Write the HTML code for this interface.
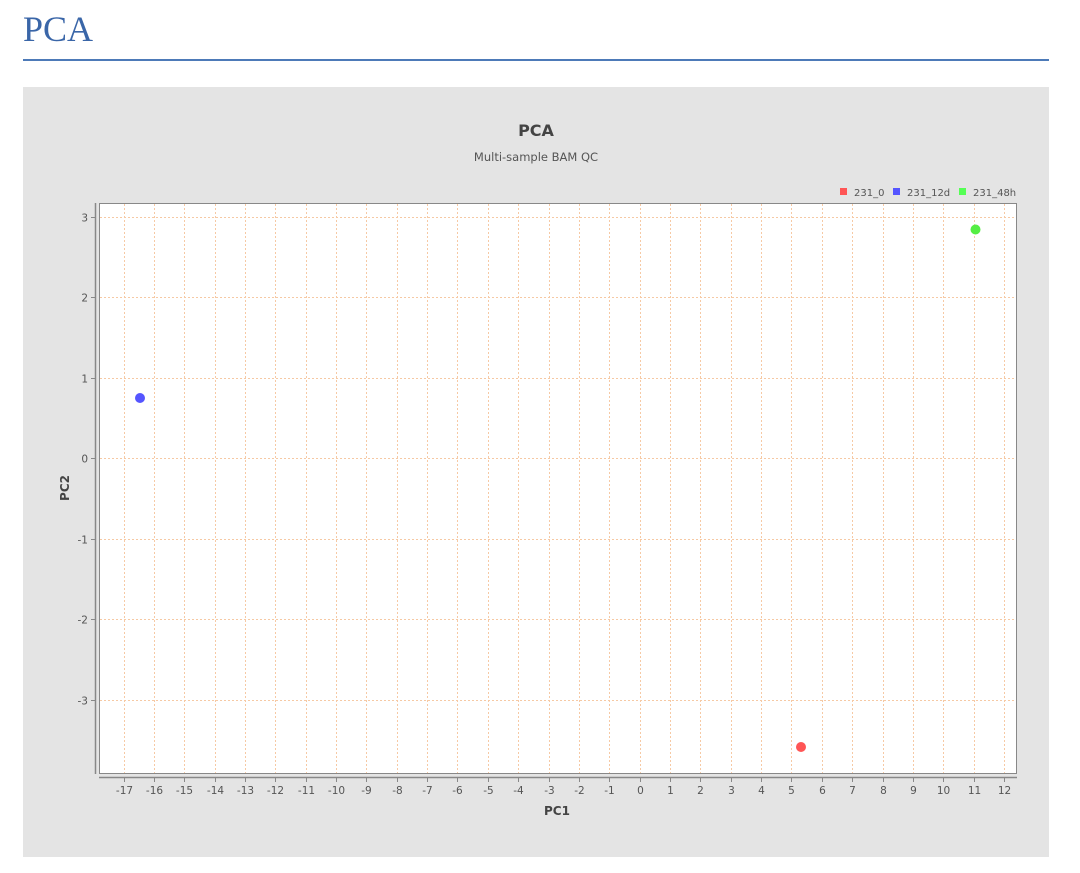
<!DOCTYPE html>
<html><head><meta charset="utf-8"><style>
body{margin:0;background:#fff;width:1080px;height:873px;overflow:hidden}
h1{position:absolute;left:23px;top:8px;margin:0;font:normal 36px "Liberation Serif",serif;color:#3a66a8;}
.rule{position:absolute;left:23px;top:59px;width:1026px;height:2px;background:#4d7ab8}
svg{position:absolute;left:0;top:0}
text{font-family:"DejaVu Sans","Liberation Sans",sans-serif}
</style></head><body>
<h1>PCA</h1><div class="rule"></div>
<svg width="1080" height="873">
<rect x="23" y="87" width="1026" height="770" fill="#e4e4e4"/>
<text x="536" y="136" text-anchor="middle" font-size="16" font-weight="bold" fill="#444">PCA</text>
<text x="536" y="161" text-anchor="middle" font-size="11.5" fill="#555">Multi-sample BAM QC</text>
<rect x="840" y="188" width="7" height="7" fill="#ff5555"/><text x="854" y="196" font-size="10" fill="#555">231_0</text>
<rect x="893" y="188" width="7" height="7" fill="#5555ff"/><text x="907" y="196" font-size="10" fill="#555">231_12d</text>
<rect x="959" y="188" width="7" height="7" fill="#55ff55"/><text x="973" y="196" font-size="10" fill="#555">231_48h</text>
<rect x="99.5" y="203.5" width="917" height="570" fill="#fff" stroke="#888"/>
<g id="g" stroke="#f6c9a4" stroke-width="1" stroke-dasharray="2,2"></g>
<line x1="95.5" y1="203" x2="95.5" y2="774" stroke="#888" stroke-width="1.5"/>
<line x1="99" y1="777.5" x2="1017" y2="777.5" stroke="#888" stroke-width="1.5"/>
<g id="t" font-size="10.5" fill="#555"></g>
<text x="557" y="815" text-anchor="middle" font-size="12" font-weight="bold" fill="#444">PC1</text>
<text transform="translate(69,488) rotate(-90)" text-anchor="middle" font-size="12" font-weight="bold" fill="#444">PC2</text>
<circle cx="140" cy="398" r="5" fill="#5555ff"/>
<circle cx="975.5" cy="229.5" r="5" fill="#55ee44"/>
<circle cx="801" cy="747" r="5" fill="#ff5555"/>
</svg>
<script>
var ns="http://www.w3.org/2000/svg",g=document.getElementById('g'),t=document.getElementById('t');
function el(p,n,a,tx){var e=document.createElementNS(ns,n);for(var k in a)e.setAttribute(k,a[k]);if(tx!=null)e.textContent=tx;p.appendChild(e);}
for(var v=-17;v<=12;v++){var x=Math.round(123.5+(v+17)*30.36)+0.5;
el(g,'line',{x1:x,y1:204,x2:x,y2:773});
el(t,'line',{x1:x,y1:778,x2:x,y2:782,stroke:'#888'});
el(t,'text',{x:x,y:794,'text-anchor':'middle'},v);}
for(var v=3;v>=-3;v--){var y=Math.round(216.5+(3-v)*80.58)+0.5;
el(g,'line',{x1:100,y1:y,x2:1016,y2:y});
el(t,'line',{x1:91,y1:y,x2:95,y2:y,stroke:'#888'});
el(t,'text',{x:88,y:y+4,'text-anchor':'end'},v);}
</script>
</body></html>
